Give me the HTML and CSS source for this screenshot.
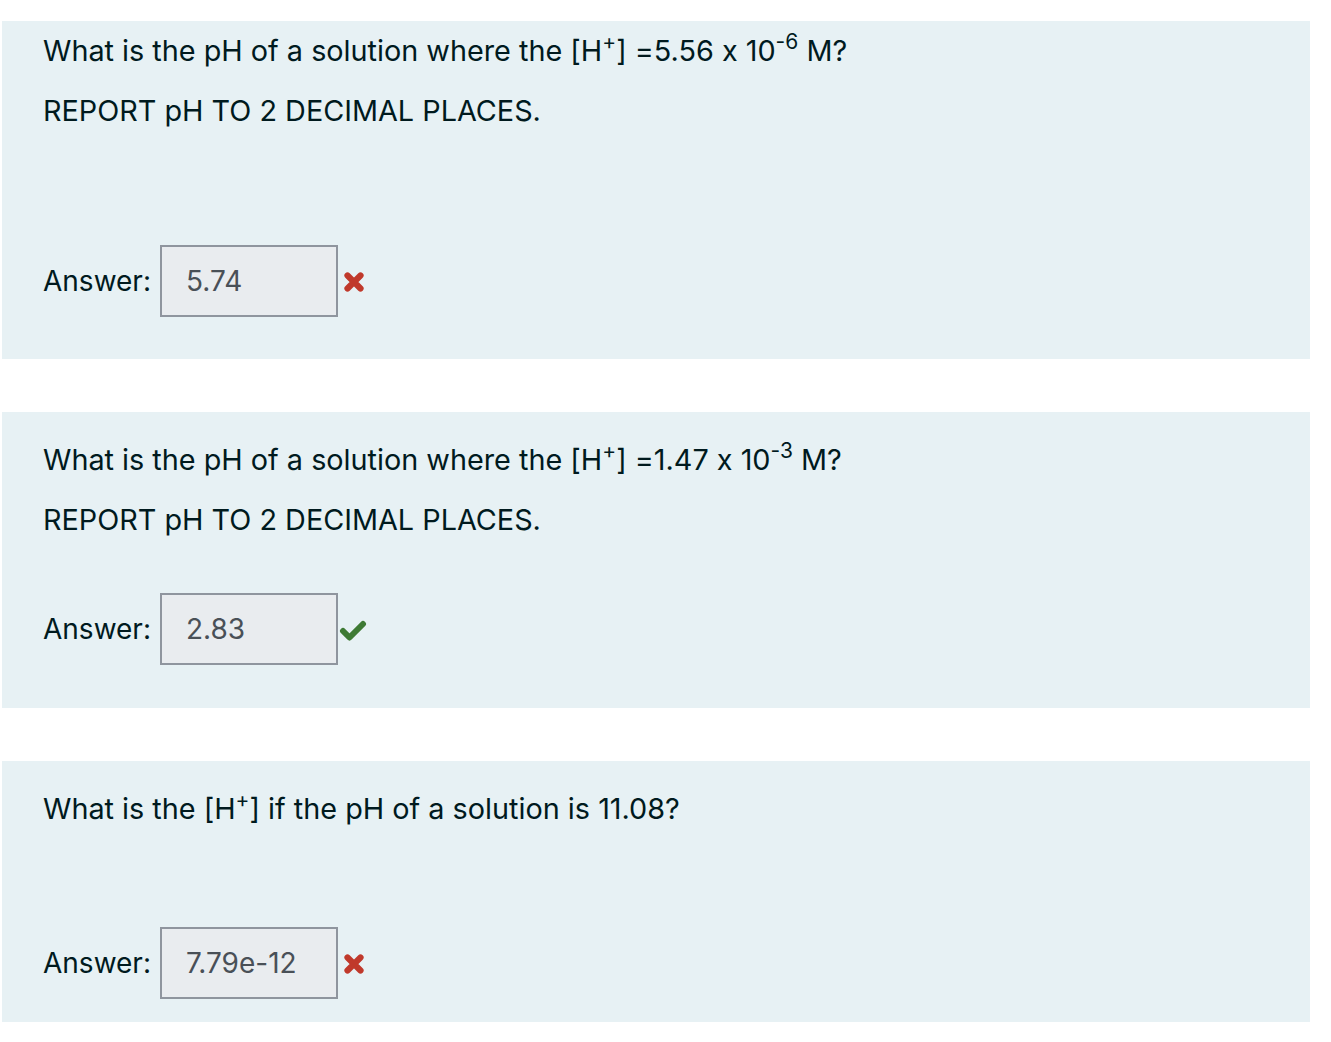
FILE: index.html
```html
<!DOCTYPE html>
<html>
<head>
<meta charset="utf-8">
<link rel="stylesheet" href="styles.css">
</head>
<body>
<div class="quiz">
  <section class="que que-first">
    <p class="qtext">What is the pH of a solution where the [H<sup>+</sup>] =5.56 x 10<sup>-6</sup> M?</p>
    <p class="qtext line2">REPORT pH TO 2 DECIMAL PLACES.</p>
    <div class="answer a1">
      <span class="label">Answer:</span>
      <span class="input">5.74</span>
      <svg class="mark" width="22" height="22" viewBox="0 0 22 22"><path d="M4.5 4.5 L17.5 17.5 M17.5 4.5 L4.5 17.5" stroke="#c0392b" stroke-width="6.2" stroke-linecap="round"/></svg>
    </div>
  </section>
  <section class="que que-second">
    <p class="qtext">What is the pH of a solution where the [H<sup>+</sup>] =1.47 x 10<sup>-3</sup> M?</p>
    <p class="qtext line2">REPORT pH TO 2 DECIMAL PLACES.</p>
    <div class="answer a2">
      <span class="label">Answer:</span>
      <span class="input">2.83</span>
      <svg class="mark check" width="28" height="22" viewBox="0 0 28 22"><path d="M4 12 L10.5 18.5 L24 5" fill="none" stroke="#3e7a34" stroke-width="6" stroke-linecap="round" stroke-linejoin="round"/></svg>
    </div>
  </section>
  <section class="que que-third">
    <p class="qtext">What is the [H<sup>+</sup>] if the pH of a solution is 11.08?</p>
    <div class="answer a3">
      <span class="label">Answer:</span>
      <span class="input">7.79e-12</span>
      <svg class="mark" width="22" height="22" viewBox="0 0 22 22"><path d="M4.5 4.5 L17.5 17.5 M17.5 4.5 L4.5 17.5" stroke="#c0392b" stroke-width="6.2" stroke-linecap="round"/></svg>
    </div>
  </section>
</div>
</body>
</html>
```

FILE: styles.css
```css
html, body {
  margin: 0;
  padding: 0;
  background: #ffffff;
}
body {
  padding: 21px 21px 0 2px;
  font-family: Inter, "Noto Sans", "Liberation Sans", sans-serif;
  font-feature-settings: "calt" 0;
  color: #001a1e;
}
.quiz {
  display: flex;
  flex-direction: column;
  gap: 53px;
}
.que {
  background: #e7f1f4;
  padding: 0 40px 42px 41px;
  display: flex;
  flex-direction: column;
  align-items: flex-start;
}
.que-first { padding-top: 10px; }
.que-second { padding-top: 28px; padding-bottom: 43px; }
.que-third { padding-top: 28px; padding-bottom: 23px; }
.qtext {
  margin: 0;
  font-size: 28.8px;
  line-height: 40px;
  white-space: nowrap;
}
.qtext sup {
  font-size: 21px;
  line-height: 0;
  vertical-align: 0;
  position: relative;
  top: -12px;
}
.line2 { margin-top: 20px; }
.answer {
  display: flex;
  align-items: center;
}
.a1 { margin-top: 114px; }
.a2 { margin-top: 53px; }
.a3 { margin-top: 98px; }
.label {
  font-size: 28px;
  width: 117px;
}
.input {
  box-sizing: border-box;
  width: 178px;
  height: 72px;
  border: 2px solid #8f959e;
  background: #e9ecef;
  color: #495057;
  font-size: 28px;
  padding-left: 24px;
  display: flex;
  align-items: center;
}
.mark {
  margin-left: 5px;
  margin-top: 1px;
}
.check {
  margin-left: 1px;
}
```
